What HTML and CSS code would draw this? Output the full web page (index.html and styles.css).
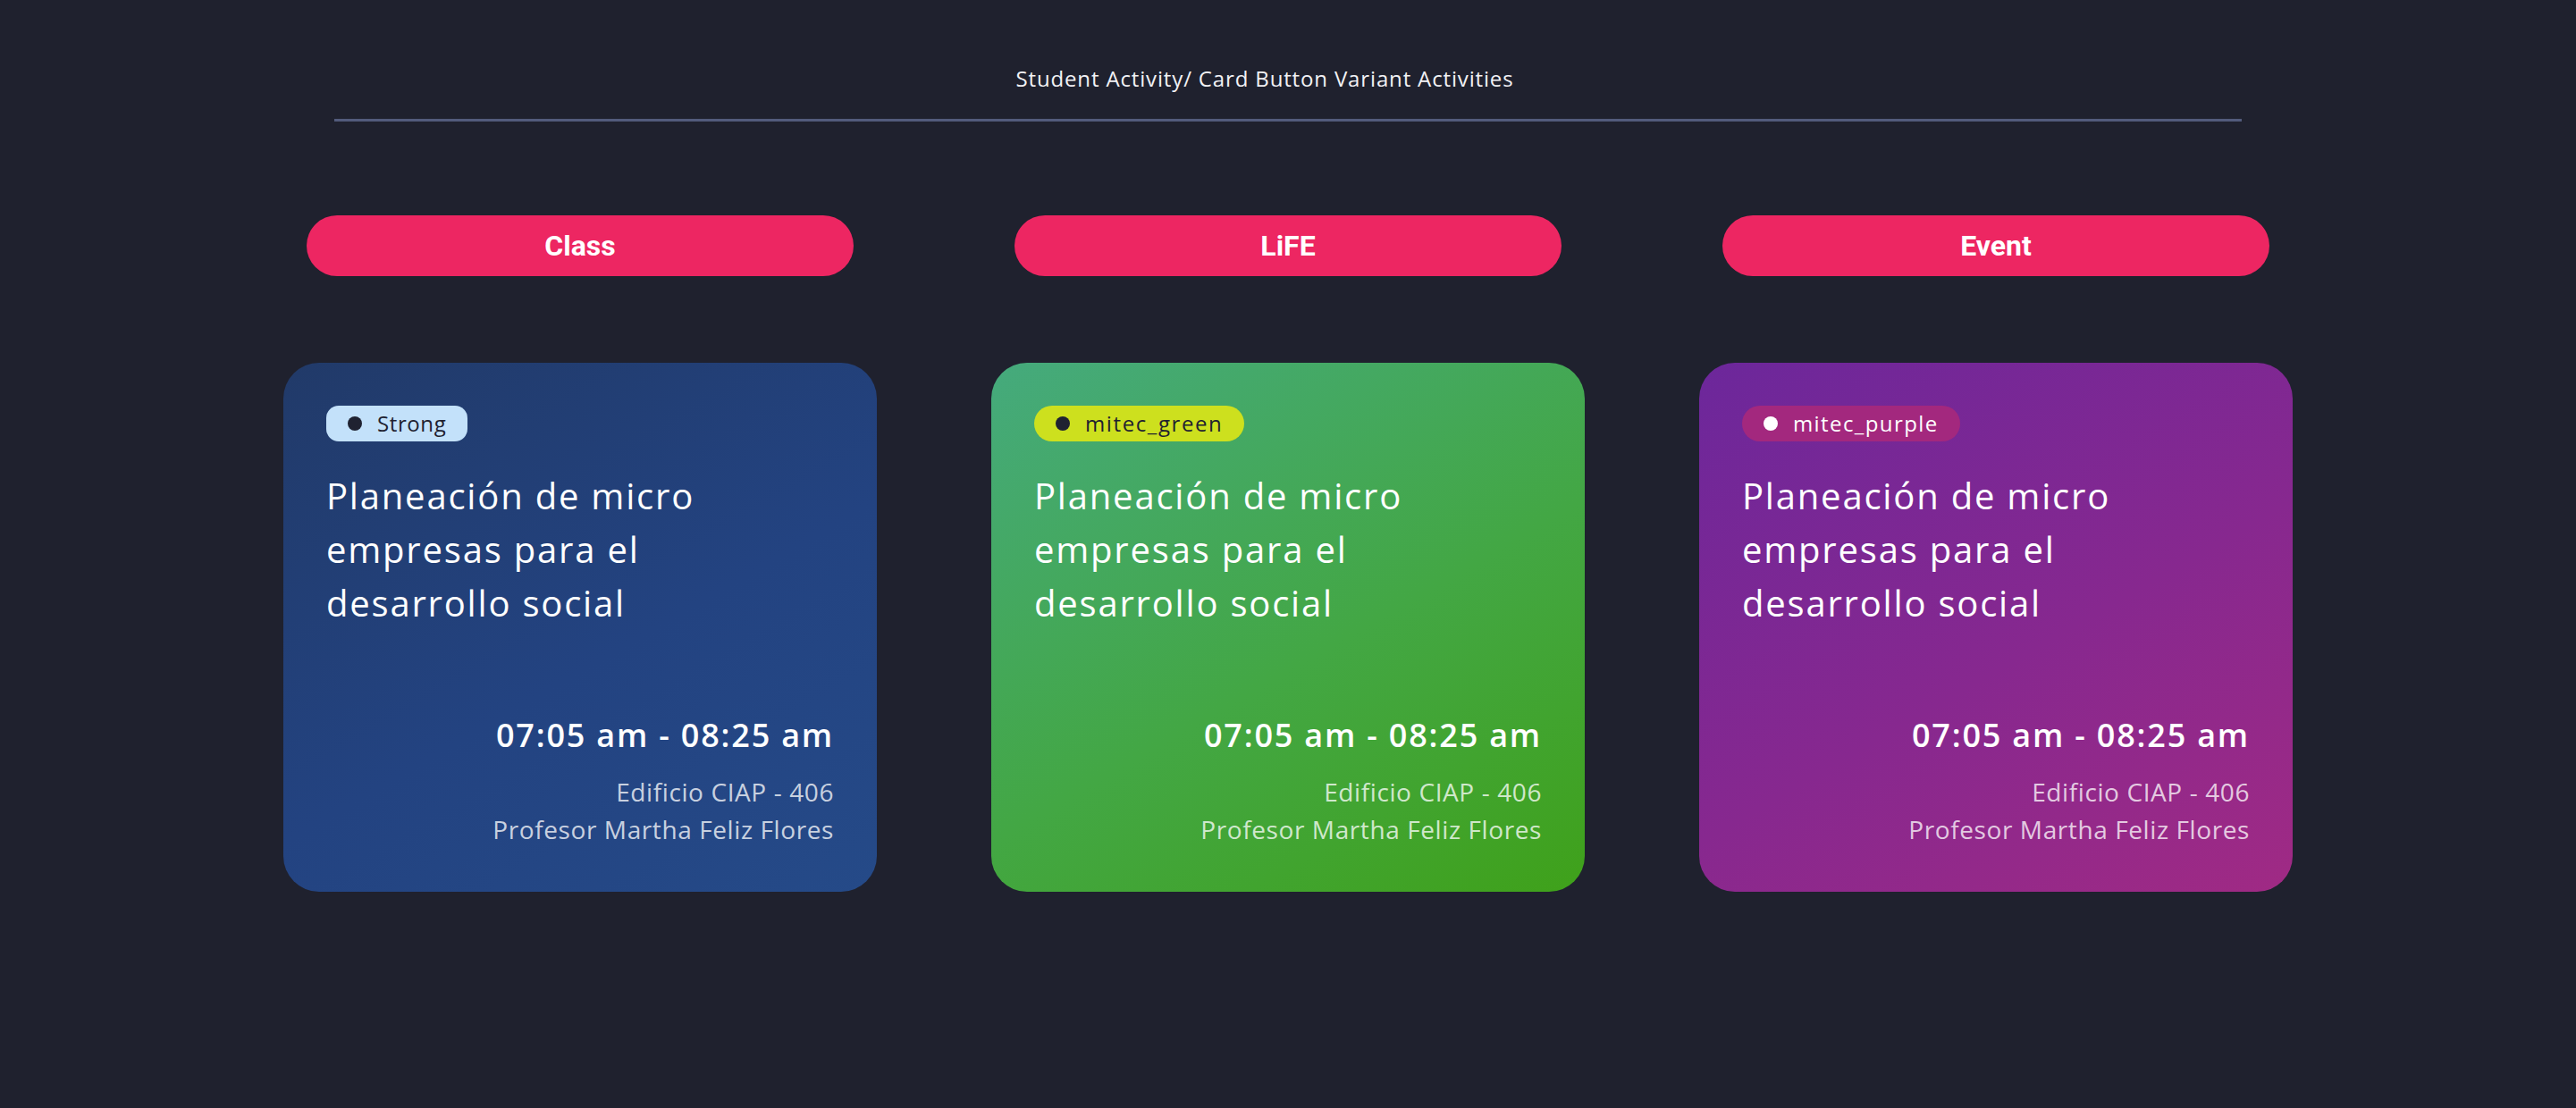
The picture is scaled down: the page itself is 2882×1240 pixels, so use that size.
FILE: index.html
```html
<!DOCTYPE html>
<html lang="es">
<head>
<meta charset="utf-8">
<title>Student Activity / Card Button Variant Activities</title>
<link rel="stylesheet" href="styles.css">
</head>
<body>
<main class="page">
  <header class="header">
    <h1 class="header-title">Student Activity/ Card Button Variant Activities</h1>
  </header>

  <section class="columns">
    <div class="column">
      <button class="variant-btn" type="button">Class</button>
      <article class="card card-blue">
        <span class="badge badge-strong"><span class="badge-dot"></span>Strong</span>
        <h2 class="card-title">Planeación de micro empresas para el desarrollo social</h2>
        <div class="card-info">
          <p class="card-time">07:05 am - 08:25 am</p>
          <p class="card-meta">Edificio CIAP - 406</p>
          <p class="card-meta">Profesor Martha Feliz Flores</p>
        </div>
      </article>
    </div>

    <div class="column">
      <button class="variant-btn" type="button">LiFE</button>
      <article class="card card-green">
        <span class="badge badge-green"><span class="badge-dot"></span>mitec_green</span>
        <h2 class="card-title">Planeación de micro empresas para el desarrollo social</h2>
        <div class="card-info">
          <p class="card-time">07:05 am - 08:25 am</p>
          <p class="card-meta">Edificio CIAP - 406</p>
          <p class="card-meta">Profesor Martha Feliz Flores</p>
        </div>
      </article>
    </div>

    <div class="column">
      <button class="variant-btn" type="button">Event</button>
      <article class="card card-purple">
        <span class="badge badge-purple"><span class="badge-dot"></span>mitec_purple</span>
        <h2 class="card-title">Planeación de micro empresas para el desarrollo social</h2>
        <div class="card-info">
          <p class="card-time">07:05 am - 08:25 am</p>
          <p class="card-meta">Edificio CIAP - 406</p>
          <p class="card-meta">Profesor Martha Feliz Flores</p>
        </div>
      </article>
    </div>
  </section>
</main>
</body>
</html>
```

FILE: styles.css
```css
* {
  box-sizing: border-box;
}

html,
body {
  margin: 0;
  padding: 0;
  background: #1f212e;
}

body {
  font-family: "Open Sans", "Noto Sans", sans-serif;
  color: #ffffff;
  min-height: 1240px;
}

.page {
  padding-top: 70px;
}

.header {
  width: 2134px;
  margin: 0 auto;
  border-bottom: 3px solid #525b7c;
  padding-bottom: 27px;
}

.header-title {
  margin: 0;
  padding-right: 52px;
  text-align: center;
  font-size: 24px;
  line-height: 36px;
  font-weight: 400;
  letter-spacing: 0.85px;
  color: #f2f2f5;
}

.columns {
  display: grid;
  grid-template-columns: repeat(3, 664px);
  column-gap: 128px;
  justify-content: center;
  margin-top: 105px;
}

.column {
  display: flex;
  flex-direction: column;
  align-items: center;
  gap: 97px;
}

.variant-btn {
  width: 612px;
  height: 68px;
  border: none;
  border-radius: 34px;
  background: #ed2662;
  color: #ffffff;
  font-family: "Roboto", "Liberation Sans", sans-serif;
  font-weight: 700;
  font-size: 32px;
  cursor: pointer;
}

.card {
  width: 664px;
  height: 592px;
  border-radius: 40px;
  padding: 48px 48px 49px 48px;
  display: flex;
  flex-direction: column;
  align-items: flex-start;
}

.card-blue {
  background: linear-gradient(150deg, #213a69 0%, #234381 55%, #254a88 100%);
}

.card-green {
  background: linear-gradient(150deg, #45aa7d 0%, #43a744 55%, #3fa11a 100%);
}

.card-purple {
  background: linear-gradient(150deg, #6c279b 0%, #87288f 55%, #a02a84 100%);
}

.badge {
  display: inline-flex;
  align-items: center;
  height: 40px;
  padding: 0 24px;
  border-radius: 20px;
  font-size: 24px;
  line-height: 1;
  gap: 17px;
  letter-spacing: 1.2px;
}

.badge-dot {
  width: 16px;
  height: 16px;
  border-radius: 50%;
  flex: none;
}

.badge-strong {
  background: #c3e1fa;
  color: #1f2130;
  border-radius: 14px;
  letter-spacing: 0.6px;
}

.badge-strong .badge-dot {
  background: #1f2231;
}

.badge-green {
  background: #cde01e;
  color: #1f2130;
  letter-spacing: 1.6px;
}

.badge-green .badge-dot {
  background: #1f2231;
}

.badge-purple {
  background: #a3287e;
  color: #ffffff;
  letter-spacing: 1.4px;
}

.badge-purple .badge-dot {
  background: #ffffff;
}

.card-title {
  margin: 31px 0 0 0;
  max-width: 520px;
  font-size: 40px;
  line-height: 60px;
  font-weight: 400;
  letter-spacing: 1.8px;
  color: #ffffff;
}

.card-info {
  margin-top: auto;
  align-self: stretch;
  text-align: right;
}

.card-info p {
  margin: 0;
}

.card-time {
  font-size: 36px;
  line-height: 54px;
  font-weight: 600;
  letter-spacing: 1.8px;
  color: #ffffff;
  margin-bottom: 15px !important;
}

.card-meta {
  font-size: 28px;
  line-height: 42px;
  letter-spacing: 0.6px;
  color: rgba(255, 255, 255, 0.76);
}
```
